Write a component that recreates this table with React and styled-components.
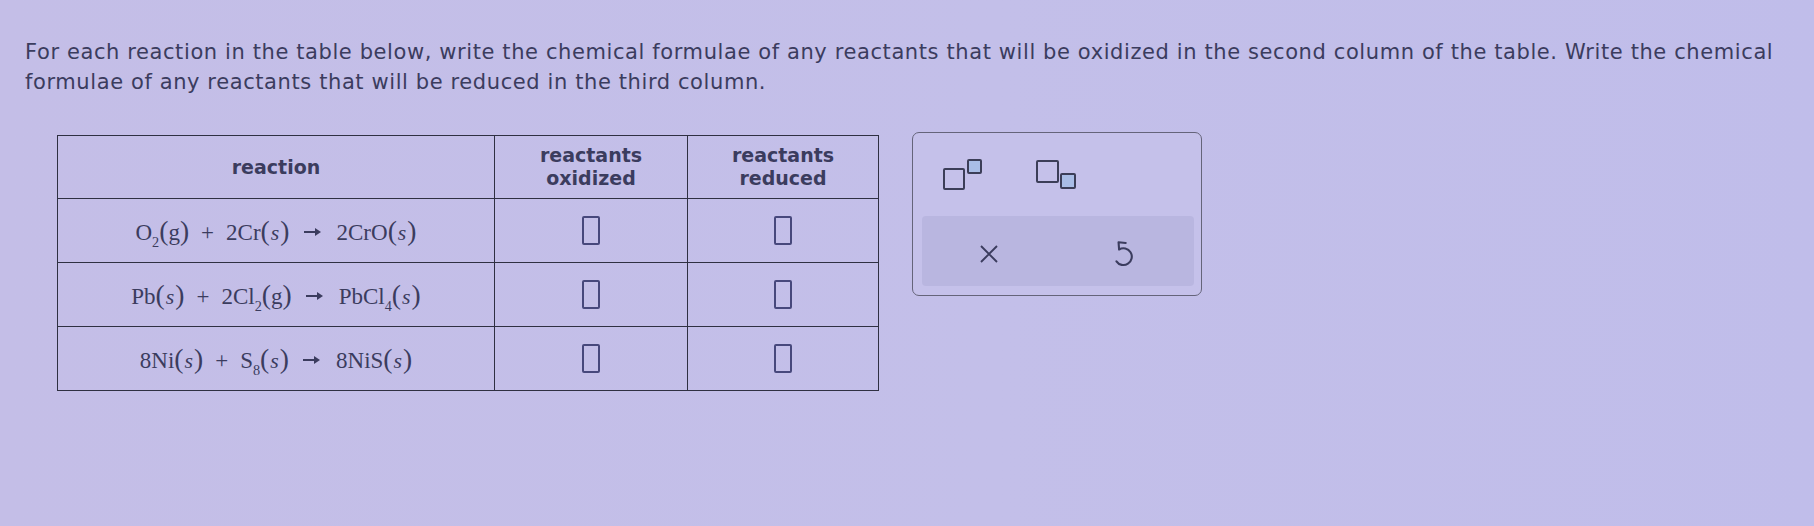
import { createGlobalStyle } from "styled-components";
import styled from "styled-components";

const GlobalStyle = createGlobalStyle`
  html, body {
    margin: 0;
    padding: 0;
    background: #c2bee8;
  }
  body {
    font-family: "DejaVu Sans", Verdana, sans-serif;
    color: #3b3c5e;
  }
`;

const Page = styled.div`
  width: 1814px;
  height: 526px;
  box-sizing: border-box;
  padding: 37px 0 0 25px;
  background: linear-gradient(90deg, #c4bee7 0%, #c3bfe9 55%, #c0bdea 100%);
`;

const Prompt = styled.p`
  margin: 0;
  font-size: 21px;
  letter-spacing: 0.6px;
  line-height: 30px;
`;

const Workspace = styled.div`
  display: flex;
  align-items: flex-start;
  gap: 33px;
  margin-top: 38px;
  padding-left: 32px;
`;

const Table = styled.table`
  border-collapse: collapse;
  border: 1.5px solid #2f3042;
`;

const HeadCell = styled.th`
  width: ${(p) => p.$w}px;
  height: 62px;
  padding: 0;
  border: 1.5px solid #2f3042;
  font-size: 19px;
  line-height: 23px;
  font-weight: bold;
  text-align: center;
  vertical-align: middle;
  color: #3b3c5e;
`;

const Cell = styled.td`
  height: 63px;
  padding: 0;
  border: 1.5px solid #2f3042;
  text-align: center;
  vertical-align: middle;
`;

const Formula = styled.span`
  font-family: "Liberation Serif", "Times New Roman", serif;
  font-size: 23px;
  color: #3b3c5e;
  white-space: nowrap;
`;

const Paren = styled.span`
  font-size: 1.2em;
`;

const State = styled.i`
  font-size: 0.95em;
  margin: 0 1px;
`;

const Sub = styled.sub`
  font-size: 0.62em;
  vertical-align: -0.5em;
  line-height: 0;
`;

const Op = styled.span`
  margin: 0 12px;
`;

const Arrow = styled.span`
  position: relative;
  display: inline-block;
  width: 13px;
  height: 2px;
  margin: 0 20px 0 14px;
  background: #3b3c5e;
  vertical-align: 0.3em;

  &::after {
    content: "";
    position: absolute;
    right: -4px;
    top: -3px;
    border-left: 6px solid #3b3c5e;
    border-top: 4px solid transparent;
    border-bottom: 4px solid transparent;
  }
`;

const AnswerBox = styled.span`
  display: inline-block;
  width: 14px;
  height: 25px;
  border: 2px solid #47487c;
  border-radius: 2px;
  vertical-align: middle;
`;

const Panel = styled.div`
  width: 290px;
  height: 164px;
  box-sizing: border-box;
  margin-top: -3px;
  border: 1.5px solid #65647a;
  border-radius: 7px;
  background: #c5c1ea;
  padding: 0 7px 9px 9px;
  display: flex;
  flex-direction: column;
`;

const TemplateRow = styled.div`
  height: 83px;
  display: grid;
  grid-template-columns: repeat(2, 94px);
  align-items: center;
  justify-items: center;
  margin-left: -6px;
`;

const ActionBar = styled.div`
  flex: 1;
  display: grid;
  grid-template-columns: 1fr 1fr;
  align-items: center;
  justify-items: center;
  padding-top: 6px;
  background: #b9b6e0;
  border-radius: 4px;
`;

const IconButton = styled.button`
  border: none;
  background: none;
  padding: 0;
  display: flex;
  flex-shrink: 0;
  cursor: pointer;
  margin-left: ${(p) => p.$shift || 0}px;
`;

const rows = [
  {
    id: "cr",
    eq: (
      <>
        O<Sub>2</Sub>
        <Paren>(</Paren>g<Paren>)</Paren>
        <Op>+</Op>2Cr<Paren>(</Paren>
        <State>s</State>
        <Paren>)</Paren>
        <Arrow />
        2CrO<Paren>(</Paren>
        <State>s</State>
        <Paren>)</Paren>
      </>
    ),
  },
  {
    id: "pb",
    eq: (
      <>
        Pb<Paren>(</Paren>
        <State>s</State>
        <Paren>)</Paren>
        <Op>+</Op>2Cl<Sub>2</Sub>
        <Paren>(</Paren>g<Paren>)</Paren>
        <Arrow />
        PbCl<Sub>4</Sub>
        <Paren>(</Paren>
        <State>s</State>
        <Paren>)</Paren>
      </>
    ),
  },
  {
    id: "ni",
    eq: (
      <>
        8Ni<Paren>(</Paren>
        <State>s</State>
        <Paren>)</Paren>
        <Op>+</Op>S<Sub>8</Sub>
        <Paren>(</Paren>
        <State>s</State>
        <Paren>)</Paren>
        <Arrow />
        8NiS<Paren>(</Paren>
        <State>s</State>
        <Paren>)</Paren>
      </>
    ),
  },
];

function SuperscriptIcon() {
  return (
    <svg width="40" height="32" viewBox="0 0 40 32">
      <rect x="1" y="10" width="20" height="20" fill="none" stroke="#3c3e58" strokeWidth="2" rx="1" />
      <rect x="25" y="1" width="13" height="13" fill="#a9bde6" stroke="#3c3e58" strokeWidth="2" rx="1" />
    </svg>
  );
}

function SubscriptIcon() {
  return (
    <svg width="42" height="30" viewBox="0 0 42 30">
      <rect x="1" y="1" width="21" height="21" fill="none" stroke="#3c3e58" strokeWidth="2" rx="1" />
      <rect x="25" y="14" width="14" height="14" fill="#a9bde6" stroke="#3c3e58" strokeWidth="2" rx="1" />
    </svg>
  );
}

function ClearIcon() {
  return (
    <svg width="22" height="22" viewBox="0 0 22 22">
      <path d="M3 3 L19 19 M19 3 L3 19" stroke="#3b3c5e" strokeWidth="1.9" fill="none" />
    </svg>
  );
}

function UndoIcon() {
  return (
    <svg width="29" height="33" viewBox="0 0 26 30">
      <path
        d="M15 4.5 L8.5 3.8 L9 10.5 A7.6 7.6 0 1 1 6.6 21.2"
        stroke="#3b3c5e"
        strokeWidth="1.9"
        fill="none"
        strokeLinecap="round"
        strokeLinejoin="round"
      />
    </svg>
  );
}

export default function App() {
  return (
    <Page>
      <GlobalStyle />
      <Prompt>
        For each reaction in the table below, write the chemical formulae of any reactants that will be oxidized in the
        second column of the table. Write the chemical
        <br />
        formulae of any reactants that will be reduced in the third column.
      </Prompt>
      <Workspace>
        <Table>
          <thead>
            <tr>
              <HeadCell $w={436}>reaction</HeadCell>
              <HeadCell $w={192}>
                reactants
                <br />
                oxidized
              </HeadCell>
              <HeadCell $w={190}>
                reactants
                <br />
                reduced
              </HeadCell>
            </tr>
          </thead>
          <tbody>
            {rows.map((r) => (
              <tr key={r.id}>
                <Cell>
                  <Formula>{r.eq}</Formula>
                </Cell>
                <Cell>
                  <AnswerBox />
                </Cell>
                <Cell>
                  <AnswerBox />
                </Cell>
              </tr>
            ))}
          </tbody>
        </Table>
        <Panel>
          <TemplateRow>
            <IconButton aria-label="superscript">
              <SuperscriptIcon />
            </IconButton>
            <IconButton aria-label="subscript">
              <SubscriptIcon />
            </IconButton>
          </TemplateRow>
          <ActionBar>
            <IconButton aria-label="clear" $shift={-3}>
              <ClearIcon />
            </IconButton>
            <IconButton aria-label="undo" $shift={-5}>
              <UndoIcon />
            </IconButton>
          </ActionBar>
        </Panel>
      </Workspace>
    </Page>
  );
}
